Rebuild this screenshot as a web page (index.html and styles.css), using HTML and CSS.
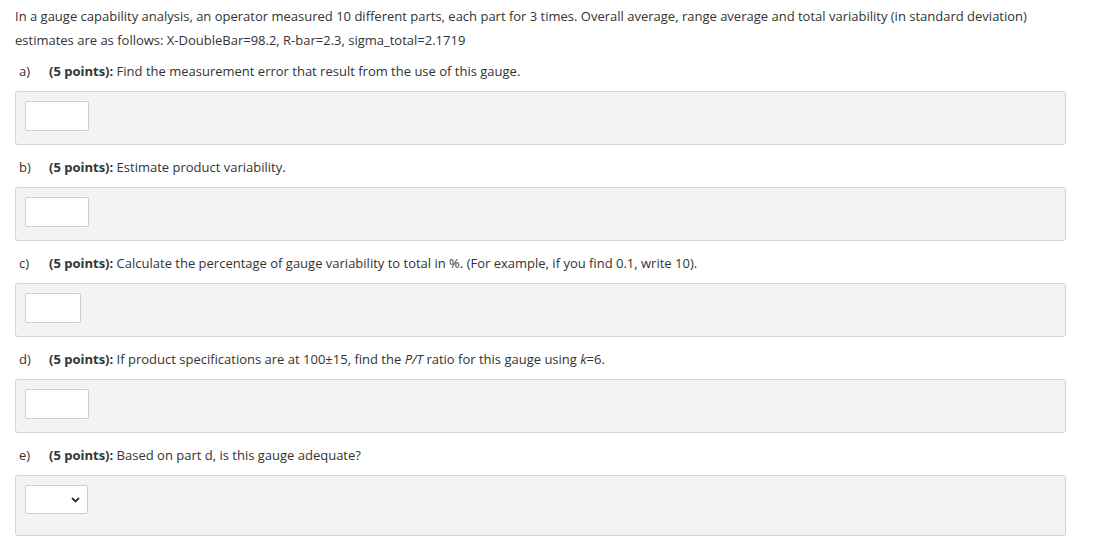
FILE: index.html
```html
<!DOCTYPE html>
<html>
<head>
<meta charset="utf-8">
<link rel="stylesheet" href="styles.css">
</head>
<body>
<div class="page">
  <p class="intro">In a gauge capability analysis, an operator measured 10 different parts, each part for 3 times. Overall average, range average and total variability (in standard deviation) estimates are as follows: X-DoubleBar=98.2, R-bar=2.3, sigma_total=2.1719</p>

  <div class="q">
    <div class="q-row"><span class="q-label">a)</span><span class="q-text"><b>(5 points):</b> Find the measurement error that result from the use of this gauge.</span></div>
    <div class="answer"><input class="field" type="text"></div>
  </div>

  <div class="q">
    <div class="q-row"><span class="q-label">b)</span><span class="q-text"><b>(5 points):</b> Estimate product variability.</span></div>
    <div class="answer"><input class="field" type="text"></div>
  </div>

  <div class="q">
    <div class="q-row"><span class="q-label">c)</span><span class="q-text"><b>(5 points):</b> Calculate the percentage of gauge variability to total in %. (For example, if you find 0.1, write 10).</span></div>
    <div class="answer"><input class="field field-narrow" type="text"></div>
  </div>

  <div class="q">
    <div class="q-row"><span class="q-label">d)</span><span class="q-text"><b>(5 points):</b> If product specifications are at 100±15, find the <i>P/T</i> ratio for this gauge using <i>k</i>=6.</span></div>
    <div class="answer"><input class="field" type="text"></div>
  </div>

  <div class="q">
    <div class="q-row"><span class="q-label">e)</span><span class="q-text"><b>(5 points):</b> Based on part d, is this gauge adequate?</span></div>
    <div class="answer answer-select">
      <div class="select-wrap">
        <select class="select"><option></option></select>
        <svg class="chev" width="9" height="6" viewBox="0 0 9 6"><path d="M1 1 L4.5 4.5 L8 1" fill="none" stroke="#333" stroke-width="1.8"/></svg>
      </div>
    </div>
  </div>
</div>
</body>
</html>
```

FILE: styles.css
```css
html, body {
  margin: 0;
  padding: 0;
  background: #fff;
}
body {
  font-family: "Open Sans", "Liberation Sans", sans-serif;
  font-size: 13px;
  color: #333;
}
.page {
  width: 1051px;
  padding: 4px 0 0 15px;
}
.intro {
  margin: 0 0 7px 0;
  line-height: 24px;
}
.q-row {
  display: flex;
  line-height: 24px;
}
.q-label {
  width: 30px;
  padding-left: 4px;
  flex: none;
}
.q-text b {
  font-weight: 700;
}
.answer {
  margin: 8px 0 10px 0;
  background: #f3f3f3;
  border: 1px solid #d3d3d3;
  border-radius: 3px;
  padding: 9px 9px 13px 9px;
  display: flex;
}
.field {
  width: 64px;
  height: 30px;
  box-sizing: border-box;
  border: 1px solid #cfcfcf;
  border-radius: 2px;
  background: #fff;
  margin: 0;
  padding: 0 4px;
  font: inherit;
}
.field-narrow {
  width: 56px;
}
.answer-select {
  padding-bottom: 21px;
}
.select-wrap {
  position: relative;
  width: 63px;
  height: 29px;
}
.select {
  appearance: none;
  -webkit-appearance: none;
  width: 63px;
  height: 29px;
  box-sizing: border-box;
  border: 1px solid #cfcfcf;
  border-radius: 2px;
  background: #fff;
  margin: 0;
  font: inherit;
}
.chev {
  position: absolute;
  left: 46px;
  top: 12px;
  pointer-events: none;
}
```
